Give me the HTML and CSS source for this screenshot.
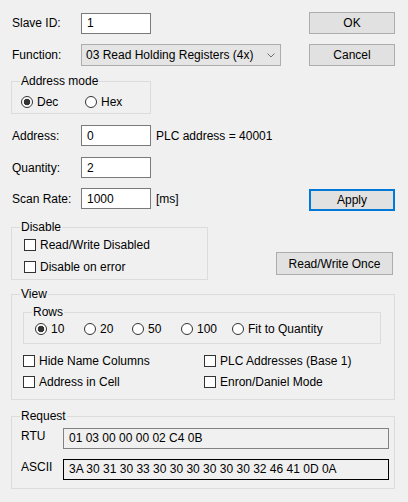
FILE: index.html
```html
<!DOCTYPE html>
<html lang="en">
  <head>
    <meta charset="UTF-8" />
    <title>Read/Write Definition</title>
    <link rel="stylesheet" href="styles.css">
  </head>
  <body>
    <form class="dlg" onsubmit="return false">

      <div class="row">
        <label class="fld"><span class="lbl">Slave ID:</span><input class="edit" value="1" /></label>
        <button class="btn">OK</button>
      </div>

      <div class="row gap10">
        <div class="fld">
          <span class="lbl">Function:</span>
          <div class="combo">
            <span>03 Read Holding Registers (4x)</span>
            <svg width="8" height="5" viewBox="0 0 8 5"><path d="M0.5 0.5 L4 4 L7.5 0.5" fill="none" stroke="#707070" stroke-width="1" /></svg>
          </div>
        </div>
        <button class="btn">Cancel</button>
      </div>

      <fieldset class="g-mode">
        <legend>Address mode</legend>
        <div class="opts mode">
          <label class="opt"><input type="radio" class="rb" name="mode" checked />Dec</label>
          <label class="opt"><input type="radio" class="rb" name="mode" />Hex</label>
        </div>
      </fieldset>

      <div class="row sm first">
        <label class="fld"><span class="lbl">Address:</span><input class="edit" value="0" /><span class="note">PLC address = 40001</span></label>
      </div>
      <div class="row sm">
        <label class="fld"><span class="lbl">Quantity:</span><input class="edit" value="2" /></label>
      </div>
      <div class="row sm last">
        <label class="fld"><span class="lbl">Scan Rate:</span><input class="edit" value="1000" /><span class="note">[ms]</span></label>
        <button class="btn apply">Apply</button>
      </div>

      <div class="split">
        <fieldset class="g-disable">
          <legend>Disable</legend>
          <label class="opt"><input type="checkbox" class="cb" />Read/Write Disabled</label>
          <label class="opt"><input type="checkbox" class="cb" />Disable on error</label>
        </fieldset>
        <button class="btn once">Read/Write Once</button>
      </div>

      <fieldset class="g-view">
        <legend>View</legend>
        <fieldset class="g-rows">
          <legend>Rows</legend>
          <div class="opts rows">
            <label class="opt"><input type="radio" class="rb" name="rows" checked />10</label>
            <label class="opt"><input type="radio" class="rb" name="rows" />20</label>
            <label class="opt"><input type="radio" class="rb" name="rows" />50</label>
            <label class="opt"><input type="radio" class="rb" name="rows" />100</label>
            <label class="opt"><input type="radio" class="rb" name="rows" />Fit to Quantity</label>
          </div>
        </fieldset>
        <div class="checks">
          <label class="opt"><input type="checkbox" class="cb" />Hide Name Columns</label>
          <label class="opt"><input type="checkbox" class="cb" />PLC Addresses (Base 1)</label>
          <label class="opt"><input type="checkbox" class="cb" />Address in Cell</label>
          <label class="opt"><input type="checkbox" class="cb" />Enron/Daniel Mode</label>
        </div>
      </fieldset>

      <fieldset class="g-req">
        <legend>Request</legend>
        <div class="req">
          <span class="req-lbl">RTU</span>
          <div class="frame">01 03 00 00 00 02 C4 0B</div>
        </div>
        <div class="req">
          <span class="req-lbl">ASCII</span>
          <div class="frame focus">3A 30 31 30 33 30 30 30 30 30 30 32 46 41 0D 0A</div>
        </div>
      </fieldset>

    </form>
  </body>
</html>
```

FILE: styles.css
```css
/* Classic Windows dialog look */
body {
  margin: 0;
  background: #f0f0f0;
  color: #000;
  font: 12px/14px "Liberation Sans", Arial, sans-serif;
}
.dlg {
  width: 408px;
  height: 502px;
  box-sizing: border-box;
  padding: 12px 13px 0 11px;
}

/* rows with a label, an edit box and maybe a button on the right */
.row {
  display: flex;
  align-items: center;
  justify-content: space-between;
  height: 22px;
}
.row.gap10 { margin-top: 10px; }
.row.sm { height: 21px; margin-top: 11px; }
.row.last { margin-top: 10px; }
.fld {
  display: flex;
  align-items: center;
}
.lbl {
  box-sizing: border-box;
  width: 70px;
  padding-left: 1px;
}
.note { margin-left: 5px; }

.edit {
  box-sizing: border-box;
  width: 70px;
  height: 21px;
  margin: 0;
  padding: 0 5px;
  border: 1px solid #7a7a7a;
  background: #fff;
  font: inherit;
  color: #000;
  outline: none;
}
.combo {
  box-sizing: border-box;
  width: 200px;
  height: 22px;
  padding: 0 5px 0 4px;
  display: flex;
  align-items: center;
  justify-content: space-between;
  border: 1px solid #adadad;
  background: #e5e5e5;
}

.btn {
  box-sizing: border-box;
  width: 86px;
  height: 22px;
  margin: 0;
  padding: 0;
  border: 1px solid #adadad;
  background: #e1e1e1;
  font: inherit;
  color: #000;
}
.btn.apply {
  align-self: flex-start;
  margin-top: 1px;
  border: 2px solid #0078d7;
}
.btn.once {
  width: 117px;
  height: 23px;
  margin: 0 2px 5px 0;
}

/* group boxes; the legend sits 9px in from the left border */
fieldset {
  margin: 0;
  padding: 0;
  min-width: 0;
  border: 1px solid #dcdcdc;
}
legend {
  margin-left: 8px;
  padding: 0 1px;
}

.opt {
  display: flex;
  align-items: center;
  gap: 4px;
  height: 14px;
  white-space: nowrap;
}
.rb, .cb {
  appearance: none;
  box-sizing: border-box;
  flex: none;
  width: 12px;
  height: 12px;
  margin: 0;
  border: 1px solid #333;
  background: #fff;
}
.rb { border-radius: 50%; }
.rb:checked { background: radial-gradient(circle, #333 0 3px, #fff 3.6px); }
.cb:checked { background: #fff; }

.opts { display: grid; }
.opts.mode {
  grid-template-columns: 64px auto;
  margin-left: 9px;
}
.opts.rows {
  grid-template-columns: 49px 48px 49px 51px auto;
  margin-left: 11px;
}

.g-mode {
  width: 138px;
  margin-top: 8px;
  padding: 7px 0 4px 0;
}

.split {
  display: flex;
  align-items: flex-end;
  justify-content: space-between;
  margin-top: 11px;
}
.g-disable {
  width: 195px;
  padding: 4px 0 5px 0;
  display: flex;
  flex-direction: column;
  gap: 8px;
}
.g-disable .opt { margin-left: 12px; }

.g-view {
  margin-top: 7px;
  padding: 4px 0 10px 0;
}
.g-rows {
  margin: 0 13px 0 11px;
  padding: 3px 0 7px 0;
}
.checks {
  display: grid;
  grid-template-columns: 181px auto;
  row-gap: 7px;
  margin: 10px 0 0 11px;
}

.g-req {
  margin-top: 9px;
  padding: 5px 5px 8px 0;
}
.req {
  display: flex;
  align-items: flex-start;
  margin-left: 9px;
}
.req + .req { margin-top: 10px; }
.req-lbl {
  width: 42px;
  padding-top: 1px;
}
.frame {
  box-sizing: border-box;
  flex: 1;
  height: 21px;
  padding: 0 5px;
  line-height: 19px;
  border: 1px solid #828282;
  background: #f0f0f0;
}
.frame.focus { border-color: #000; }
```
